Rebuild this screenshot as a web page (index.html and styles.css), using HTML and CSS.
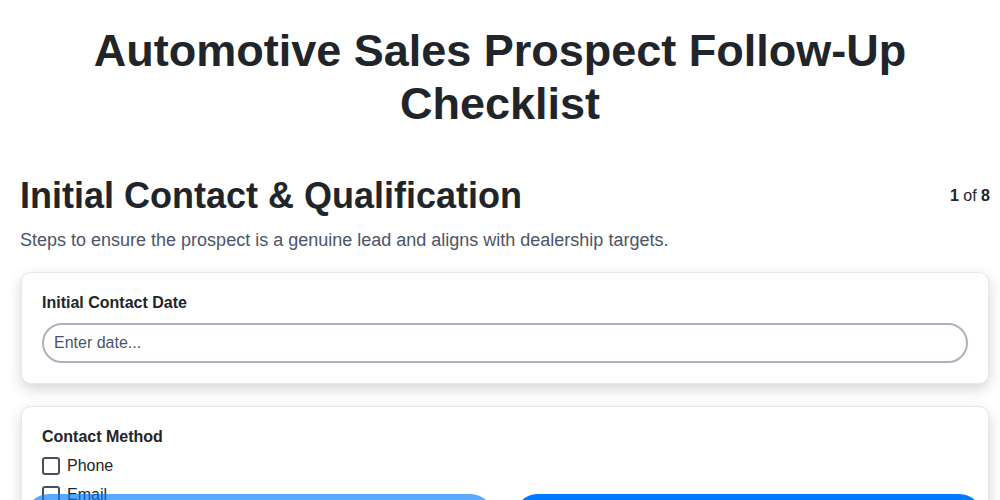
FILE: index.html
```html
<!DOCTYPE html>
<html lang="en">
<head>
<meta charset="utf-8">
<title>Automotive Sales Prospect Follow-Up Checklist</title>
<link rel="stylesheet" href="styles.css">
</head>
<body>
<main class="page">
  <h1 class="title">Automotive Sales Prospect Follow-Up Checklist</h1>
  <section class="step">
    <div class="step-head">
      <h2 class="step-title">Initial Contact &amp; Qualification</h2>
      <div class="step-count"><b>1</b> of <b>8</b></div>
    </div>
    <p class="step-desc">Steps to ensure the prospect is a genuine lead and aligns with dealership targets.</p>
    <div class="cards">
      <div class="card">
        <label class="field-label">Initial Contact Date</label>
        <input class="text-input" type="text" placeholder="Enter date...">
      </div>
      <div class="card">
        <div class="field-label">Contact Method</div>
        <div class="options">
          <label class="option"><span class="box"></span><span>Phone</span></label>
          <label class="option"><span class="box"></span><span>Email</span></label>
          <label class="option"><span class="box"></span><span>Walk-in</span></label>
          <label class="option"><span class="box"></span><span>Website Form</span></label>
        </div>
      </div>
    </div>
  </section>
</main>
<nav class="nav">
  <button class="btn btn-prev" disabled>Previous</button>
  <button class="btn btn-next">Next</button>
</nav>
</body>
</html>
```

FILE: styles.css
```css
* { box-sizing: border-box; }
html, body { margin: 0; padding: 0; background: #ffffff; }
body {
  font-family: "Liberation Sans", Arial, sans-serif;
  color: #212529;
}
.page {
  padding: 0 10px 0 20px;
}
.title {
  margin: 24px 0 0 -10px;
  text-align: center;
  font-size: 45px;
  line-height: 53px;
  font-weight: 700;
  color: #212529;
}
.step { margin-top: 44px; }
.step-head {
  display: flex;
  justify-content: space-between;
  align-items: center;
}
.step-title {
  margin: 0;
  font-size: 36px;
  line-height: 44px;
  font-weight: 700;
  color: #212529;
}
.step-count {
  font-size: 16px;
  color: #212529;
}
.step-desc {
  margin: 10px 0 0 0;
  font-size: 18px;
  line-height: 24px;
  color: #4a5568;
}
.cards {
  margin-top: 20px;
  display: flex;
  flex-direction: column;
  gap: 22px;
  padding-right: 1px;
  padding-left: 1px;
}
.card {
  background: #ffffff;
  border: 1px solid #e6e8ec;
  border-radius: 10px;
  box-shadow: 0 5px 14px rgba(0, 0, 0, 0.17);
  padding: 20px;
  display: flex;
  flex-direction: column;
}
.field-label {
  font-size: 16px;
  line-height: 19px;
  font-weight: 700;
  color: #212529;
}
.text-input {
  margin-top: 11px;
  height: 40px;
  width: 100%;
  border: 2px solid #a9b3bd;
  border-radius: 20px;
  padding: 0 10px;
  font-family: "Liberation Sans", Arial, sans-serif;
  font-size: 16px;
  color: #212529;
  background: #ffffff;
  outline: none;
}
.text-input::placeholder { color: #4a5568; opacity: 1; }
.options {
  margin-top: 11px;
  display: flex;
  flex-direction: column;
  gap: 11px;
}
.option {
  display: flex;
  align-items: center;
  gap: 7px;
  font-size: 16px;
  line-height: 18px;
  color: #212529;
}
.box {
  width: 18px;
  height: 18px;
  border: 2px solid #4a4f5c;
  border-radius: 3px;
  background: #ffffff;
  flex: none;
}
.nav {
  position: fixed;
  left: 25px;
  width: 958px;
  top: 494px;
  display: flex;
  gap: 20px;
}
.btn {
  flex: 1;
  height: 48px;
  border: none;
  border-radius: 24px;
  font-family: "Liberation Sans", Arial, sans-serif;
  font-size: 16px;
  font-weight: 700;
  color: #ffffff;
  background: #007bff;
}
.btn-prev { opacity: 0.65; }
```
